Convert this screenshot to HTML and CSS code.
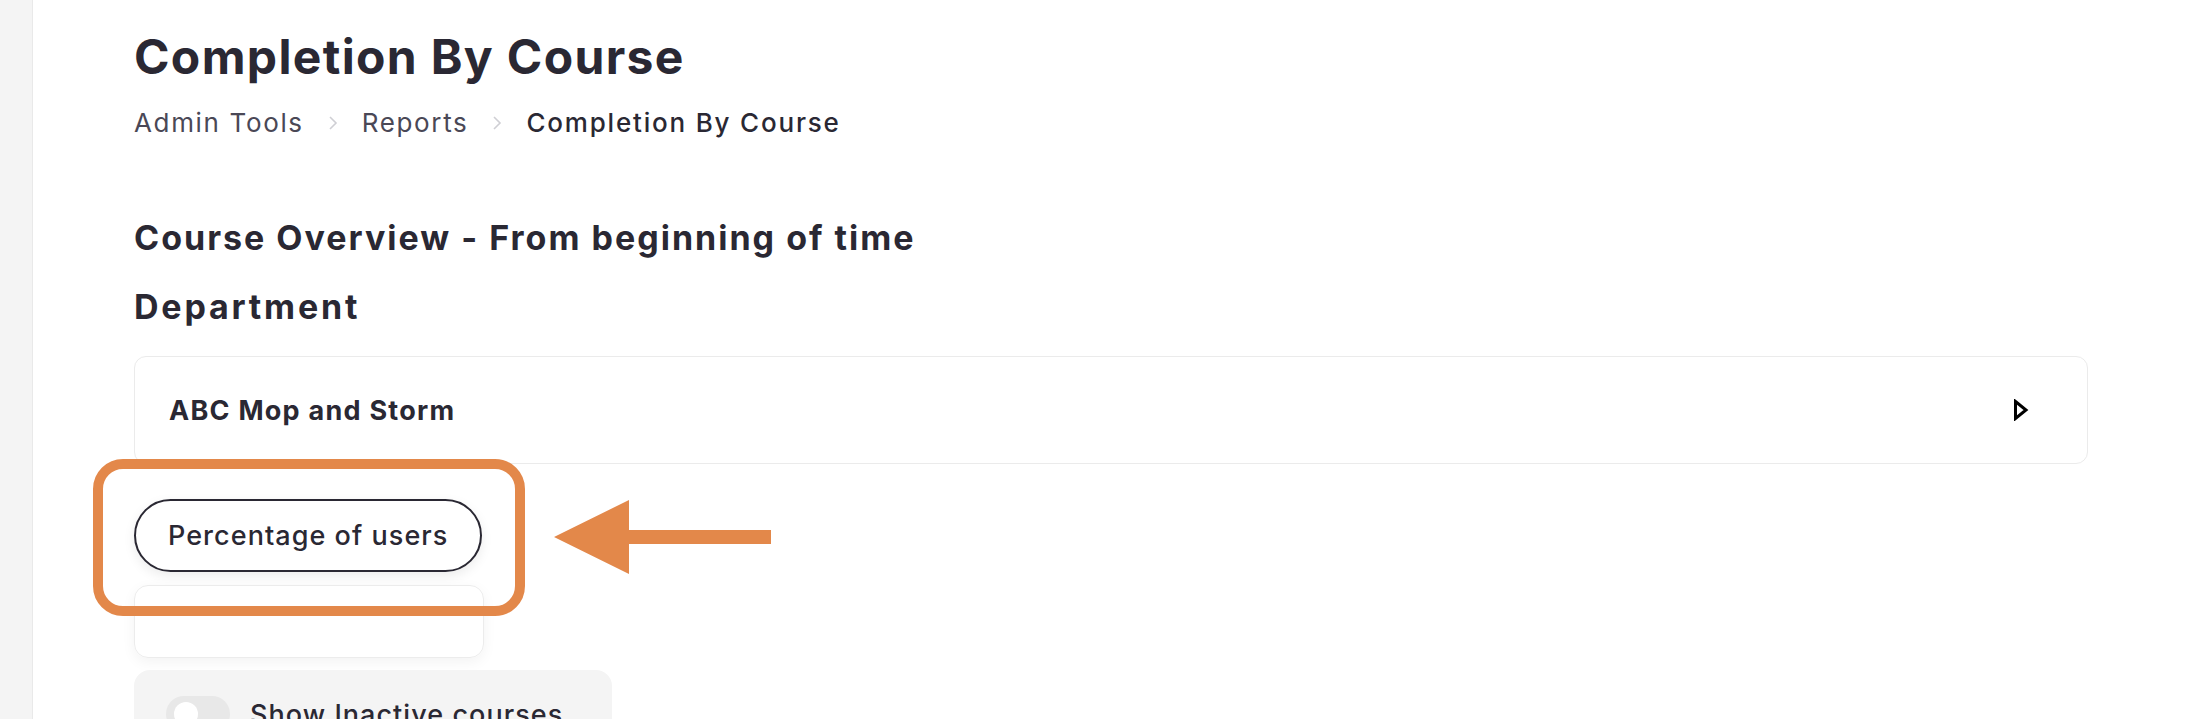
FILE: index.html
```html
<!DOCTYPE html>
<html lang="en">
<head>
    <meta charset="UTF-8">
    <meta name="viewport" content="width=device-width, initial-scale=1.0">
    <title>Completion By Course</title>
    <link rel="stylesheet" href="styles.css">
</head>
<body>
    <div class="sidebar"></div>
    <div class="main">
        <h1 class="page-title">Completion By Course</h1>
        <div class="breadcrumb">
            <span class="crumb">Admin Tools</span>
            <svg class="crumb-sep" width="10" height="16" viewBox="0 0 10 16"><path d="M2 2 L8 8 L2 14" fill="none" stroke="#cfcfd4" stroke-width="1.6"/></svg>
            <span class="crumb">Reports</span>
            <svg class="crumb-sep" width="10" height="16" viewBox="0 0 10 16"><path d="M2 2 L8 8 L2 14" fill="none" stroke="#cfcfd4" stroke-width="1.6"/></svg>
            <span class="crumb current">Completion By Course</span>
        </div>

        <h2 class="section-title">Course Overview - From beginning of time</h2>
        <h3 class="section-title dept">Department</h3>

        <div class="dept-card">
            <span class="dept-name">ABC Mop and Storm</span>
            <svg class="dept-toggle" width="16" height="22" viewBox="0 0 16 22"><path d="M2.5 2.5 L13 11 L2.5 19.5 Z" fill="none" stroke="#000" stroke-width="3" stroke-linejoin="miter"/></svg>
        </div>

        <button class="pill-btn">Percentage of users</button>
        <div class="empty-card"></div>

        <div class="switch-box">
            <span class="switch"><span class="knob"></span></span>
            <span class="switch-label">Show Inactive courses</span>
        </div>

        <!-- annotation -->
        <div class="highlight"></div>
        <svg class="arrow" width="218" height="75" viewBox="0 0 218 75"><polygon points="0,37 75,0 75,30 217,30 217,44 75,44 75,74" fill="#e3884a"/></svg>
    </div>
</body>
</html>
```

FILE: styles.css
```css
body {
    margin: 0;
    font-family: Inter, "Open Sans", sans-serif;
    color: #2a2833;
    background: #fff;
    display: flex;
    height: 100vh;
    overflow: hidden;
}
.sidebar {
    width: 32px;
    flex-shrink: 0;
    background: #f4f4f4;
    border-right: 1px solid #e9e9e9;
}
.main {
    flex: 1;
    position: relative;
    padding: 28px 100px 0 101px;
}
.page-title {
    margin: 0;
    font-size: 48px;
    line-height: 58px;
    font-weight: 700;
    letter-spacing: 1.35px;
}
.breadcrumb {
    display: flex;
    align-items: center;
    gap: 24px;
    margin-top: 22px;
    font-size: 26px;
    line-height: 30px;
    letter-spacing: 1.65px;
    color: #4a4856;
}
.crumb.current {
    color: #2a2833;
    font-weight: 500;
    letter-spacing: 1.8px;
}
.section-title {
    margin: 79px 0 0;
    font-size: 34px;
    line-height: 42px;
    font-weight: 700;
    letter-spacing: 2px;
}
.section-title.dept {
    margin-top: 27px;
    letter-spacing: 2.8px;
}
.dept-card {
    margin-top: 28px;
    height: 108px;
    box-sizing: border-box;
    border: 1px solid #ebebeb;
    border-radius: 12px;
    display: flex;
    align-items: center;
    justify-content: space-between;
    padding: 0 58px 0 34px;
}
.dept-name {
    font-size: 27px;
    font-weight: 700;
    letter-spacing: 1.25px;
}
.pill-btn {
    display: block;
    margin-top: 35px;
    width: 348px;
    height: 73px;
    padding: 0 0 0 32px;
    text-align: left;
    border: 2px solid #2a2833;
    border-radius: 37px;
    background: #fff;
    box-shadow: 0 4px 12px rgba(0, 0, 0, 0.08);
    font-family: inherit;
    font-size: 27px;
    font-weight: 500;
    letter-spacing: 1.05px;
    color: #2a2833;
}
.empty-card {
    margin-top: 13px;
    width: 350px;
    height: 73px;
    box-sizing: border-box;
    border: 1px solid #ececec;
    border-radius: 14px;
    box-shadow: 0 4px 14px rgba(0, 0, 0, 0.05);
}
.switch-box {
    margin-top: 12px;
    width: 478px;
    box-sizing: border-box;
    padding: 26px 32px;
    background: #f4f4f4;
    border-radius: 16px;
    display: flex;
    align-items: center;
    gap: 20px;
}
.switch {
    position: relative;
    width: 64px;
    height: 36px;
    border-radius: 18px;
    background: #e8e8e8;
}
.knob {
    position: absolute;
    left: 8px;
    top: 6px;
    width: 24px;
    height: 24px;
    border-radius: 50%;
    background: #fff;
}
.switch-label {
    font-size: 27px;
    font-weight: 500;
    letter-spacing: 1.05px;
}
.highlight {
    position: absolute;
    left: 60px;
    top: 459px;
    width: 432px;
    height: 157px;
    box-sizing: border-box;
    border: 10px solid #e3884a;
    border-radius: 30px;
}
.arrow {
    position: absolute;
    left: 521px;
    top: 500px;
}
```
